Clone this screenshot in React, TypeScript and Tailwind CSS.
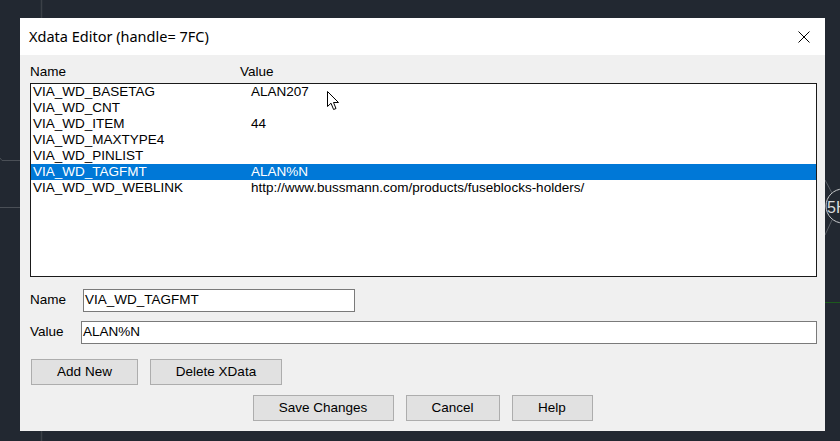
import React from "react";

const rows: [string, string][] = [
  ["VIA_WD_BASETAG", "ALAN207"],
  ["VIA_WD_CNT", ""],
  ["VIA_WD_ITEM", "44"],
  ["VIA_WD_MAXTYPE4", ""],
  ["VIA_WD_PINLIST", ""],
  ["VIA_WD_TAGFMT", "ALAN%N"],
  ["VIA_WD_WD_WEBLINK", "http://www.bussmann.com/products/fuseblocks-holders/"],
];

const SELECTED = 5;

function Btn({ label, w }: { label: string; w: string }) {
  return (
    <div
      className={`${w} h-[26px] flex items-center justify-center bg-[#e1e1e1] border border-[#adadad] text-[13.5px] text-black`}
    >
      {label}
    </div>
  );
}

export default function App() {
  return (
    <div
      className="relative w-[840px] h-[441px] bg-[#222831] overflow-hidden"
      style={{ fontFamily: '"Liberation Sans", Arial, sans-serif' }}
    >
      {/* background CAD drawing */}
      <svg className="absolute left-0 top-0" width="840" height="441" viewBox="0 0 840 441">
        <line x1="41.5" y1="0" x2="41.5" y2="441" stroke="#3b4047" strokeWidth="1.5" />
        <polyline points="0,158 2,160.5 20,160.5" fill="none" stroke="#4a4f56" strokeWidth="1" />
        <line x1="0" y1="207.5" x2="20" y2="207.5" stroke="#4a4f56" strokeWidth="1" />
        <line x1="825" y1="302.5" x2="840" y2="302.5" stroke="#1d5a1d" strokeWidth="1" />
        <circle cx="843" cy="206" r="17" fill="none" stroke="#c8cacc" strokeWidth="1" />
        <line x1="825" y1="180" x2="832" y2="193" stroke="#5a5f66" strokeWidth="1" />
        <line x1="832" y1="220" x2="825" y2="235" stroke="#5a5f66" strokeWidth="1" />
        <text x="827" y="213" fill="#d8dadc" fontSize="16" fontFamily="Liberation Sans, Arial, sans-serif">
          5H
        </text>
      </svg>

      {/* dialog window */}
      <div className="absolute left-[20px] top-[18px] w-[805px] h-[413px] flex flex-col">
        <div className="h-[37px] bg-white flex items-center justify-between pl-[9px] pr-[15px]">
          <span
            className="text-[14.5px] text-black"
            style={{ fontFamily: '"Noto Sans", "Open Sans", sans-serif' }}
          >
            Xdata Editor (handle= 7FC)
          </span>
          <svg width="12" height="12" viewBox="0 0 12 12">
            <line x1="0.5" y1="0.5" x2="11.5" y2="11.5" stroke="#000" strokeWidth="1" />
            <line x1="11.5" y1="0.5" x2="0.5" y2="11.5" stroke="#000" strokeWidth="1" />
          </svg>
        </div>

        <div className="flex-1 bg-[#f0f0f0] flex flex-col pt-[6px] pl-[10px] pr-[8px] pb-[10px]">
          <div className="h-[22px] flex items-center text-[13.5px] text-black">
            <span className="w-[210px]">Name</span>
            <span>Value</span>
          </div>

          <div className="relative h-[194px] bg-white border border-[#1a1a1a] flex flex-col">
            {rows.map(([n, v], i) => (
              <div
                key={n}
                className={`h-[16px] flex items-center pl-[2px] text-[13.5px] leading-none ${
                  i === SELECTED ? "bg-[#0078d7] text-white" : "text-black"
                }`}
              >
                <span className="w-[218px] shrink-0">{n}</span>
                <span>{v}</span>
              </div>
            ))}
            {/* mouse pointer */}
            <svg className="absolute left-[296px] top-[7px]" width="13" height="20" viewBox="0 0 13 20">
              <path
                d="M0.5 0.5 L0.5 15.5 L4 12.2 L6.6 18.5 L9 17.5 L6.5 11.5 L11.5 11.5 Z"
                fill="#fff"
                stroke="#000"
                strokeWidth="1"
                strokeLinejoin="miter"
              />
            </svg>
          </div>

          <div className="mt-[12px] h-[23px] flex items-center text-[13.5px] text-black">
            <span className="w-[53px]">Name</span>
            <div className="w-[272px] h-[23px] bg-white border border-[#7a7a7a] flex items-center pl-[1px]">
              VIA_WD_TAGFMT
            </div>
          </div>

          <div className="mt-[9px] h-[23px] flex items-center text-[13.5px] text-black">
            <span className="w-[51px]">Value</span>
            <div className="flex-1 h-[23px] bg-white border border-[#7a7a7a] flex items-center pl-[1px]">
              ALAN%N
            </div>
          </div>

          <div className="mt-[15px] flex gap-[12px] ml-[1px]">
            <Btn label="Add New" w="w-[107px]" />
            <Btn label="Delete XData" w="w-[132px]" />
          </div>

          <div className="mt-[10px] flex justify-center gap-[12px] pr-[2px]">
            <Btn label="Save Changes" w="w-[141px]" />
            <Btn label="Cancel" w="w-[94px]" />
            <Btn label="Help" w="w-[81px]" />
          </div>
        </div>
      </div>
    </div>
  );
}
